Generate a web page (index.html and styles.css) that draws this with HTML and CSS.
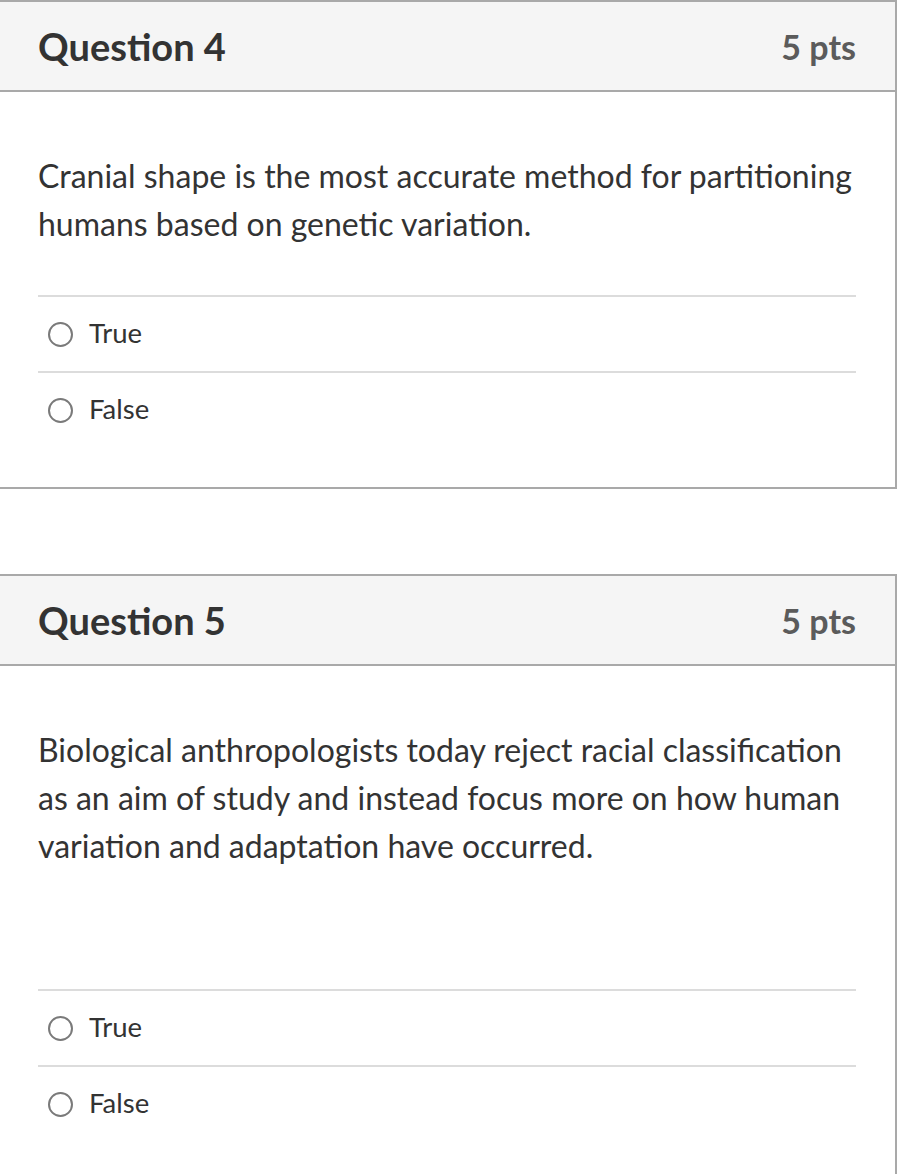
FILE: index.html
```html
<!DOCTYPE html>
<html lang="en">
<head>
<meta charset="utf-8">
<title>Quiz</title>
<link rel="stylesheet" href="styles.css">
</head>
<body>
<div class="quiz">
  <section class="question">
    <header class="question-header">
      <h2 class="question-title">Question 4</h2>
      <span class="question-points">5 pts</span>
    </header>
    <div class="question-body">
      <p class="question-text">Cranial shape is the most accurate method for partitioning humans based on genetic variation.</p>
      <div class="answers">
        <label class="answer"><span class="radio"></span><span class="answer-label">True</span></label>
        <label class="answer"><span class="radio"></span><span class="answer-label">False</span></label>
      </div>
    </div>
  </section>

  <section class="question">
    <header class="question-header">
      <h2 class="question-title">Question 5</h2>
      <span class="question-points">5 pts</span>
    </header>
    <div class="question-body">
      <p class="question-text question-text-spaced">Biological anthropologists today reject racial classification as an aim of study and instead focus more on how human variation and adaptation have occurred.</p>
      <div class="answers">
        <label class="answer"><span class="radio"></span><span class="answer-label">True</span></label>
        <label class="answer"><span class="radio"></span><span class="answer-label">False</span></label>
      </div>
    </div>
  </section>
</div>
</body>
</html>
```

FILE: styles.css
```css
html, body {
  margin: 0;
  padding: 0;
  background: #ffffff;
}

body {
  font-family: Lato, "Open Sans", "Liberation Sans", sans-serif;
  color: #333333;
}

.quiz {
  display: flex;
  flex-direction: column;
  gap: 85px;
  margin-left: -2px;
  width: 899px;
}

.question {
  border: 2px solid #a9a9a9;
  background: #ffffff;
}

.question-header {
  display: flex;
  align-items: center;
  justify-content: space-between;
  height: 88px;
  padding: 0 39px 0 38px;
  background: #f5f5f5;
  border-bottom: 2px solid #a9a9a9;
}

.question-title {
  margin: 0;
  font-size: 38px;
  font-weight: 700;
  color: #333333;
}

.question-points {
  font-size: 34px;
  font-weight: 700;
  color: #5b5b5b;
}

.question-body {
  padding: 60px 39px 40px 38px;
}

.question-text {
  margin: 0 0 47px;
  font-size: 32px;
  line-height: 48px;
  color: #333333;
}

.question-text-spaced {
  margin-bottom: 119px;
}

.answers {
  display: flex;
  flex-direction: column;
}

.answer {
  display: flex;
  align-items: center;
  gap: 16px;
  height: 74px;
  padding-left: 10px;
  border-top: 2px solid #dcdcdc;
}

.radio {
  box-sizing: border-box;
  width: 25px;
  height: 25px;
  border: 2px solid #7a7a7a;
  border-radius: 50%;
  flex: none;
}

.answer-label {
  padding-bottom: 3px;
  font-size: 27.5px;
  color: #333333;
}
```
